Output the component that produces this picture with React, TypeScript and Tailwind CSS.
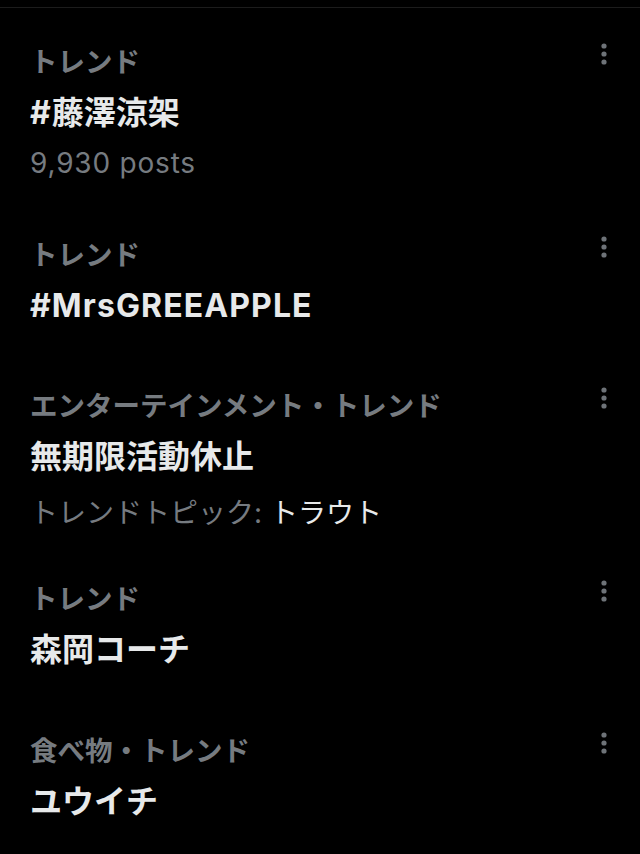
import React from "react";

const FONT = 'Inter, "Noto Sans CJK JP", "Noto Sans", sans-serif';

function Dots() {
  return (
    <svg width="20" height="24" viewBox="0 0 20 24" className="shrink-0">
      <circle cx="10" cy="4" r="2.6" fill="#6e7378" />
      <circle cx="10" cy="12" r="2.6" fill="#6e7378" />
      <circle cx="10" cy="20" r="2.6" fill="#6e7378" />
    </svg>
  );
}

type Item = {
  cat: string;
  title: React.ReactNode;
  sub?: React.ReactNode;
  mt: string;
  subMt?: string;
};

function Row({ cat, title, sub, mt, subMt }: Item) {
  return (
    <div className={`flex flex-row pl-[30px] pr-[26px] ${mt}`}>
      <div className="flex-1 flex flex-col">
        <div className="h-[52px] leading-[52px] text-[27.5px] font-semibold text-[#767b80] whitespace-nowrap">
          {cat}
        </div>
        <div className="h-[50px] leading-[50px] text-[32px] font-bold text-[#e7e9ea] whitespace-nowrap">
          {title}
        </div>
        {sub ? (
          <div className={`h-[50px] leading-[50px] whitespace-nowrap ${subMt ?? ""}`}>{sub}</div>
        ) : null}
      </div>
      <div className="mt-[6px]">
        <Dots />
      </div>
    </div>
  );
}

export default function App() {
  return (
    <div className="w-[640px] h-[854px] bg-black overflow-hidden" style={{ fontFamily: FONT }}>
      <div className="h-[8px] border-b border-[#1c1c1c]" />
      <div className="flex flex-col">
        <Row
          mt="mt-[28px]"
          cat="トレンド"
          title={
            <>
              <span className="tracking-[1px]">#</span>藤澤涼架
            </>
          }
          sub={<span className="text-[28px] tracking-[0.8px] text-[#767b80]">9,930 posts</span>}
        />
        <Row
          mt="mt-[41px]"
          cat="トレンド"
          title={<span className="tracking-[1.1px]">#MrsGREEAPPLE</span>}
        />
        <Row
          mt="mt-[49px]"
          cat="エンターテインメント・トレンド"
          title="無期限活動休止"
          subMt="mt-[6px]"
          sub={
            <span className="text-[28px]">
              <span className="text-[#767b80]">トレンドトピック:</span>
              <span className="ml-[8px] text-[#e7e9ea]">トラウト</span>
            </span>
          }
        />
        <Row mt="mt-[35px]" cat="トレンド" title="森岡コーチ" />
        <Row mt="mt-[50px]" cat="食べ物・トレンド" title="ユウイチ" />
      </div>
    </div>
  );
}
